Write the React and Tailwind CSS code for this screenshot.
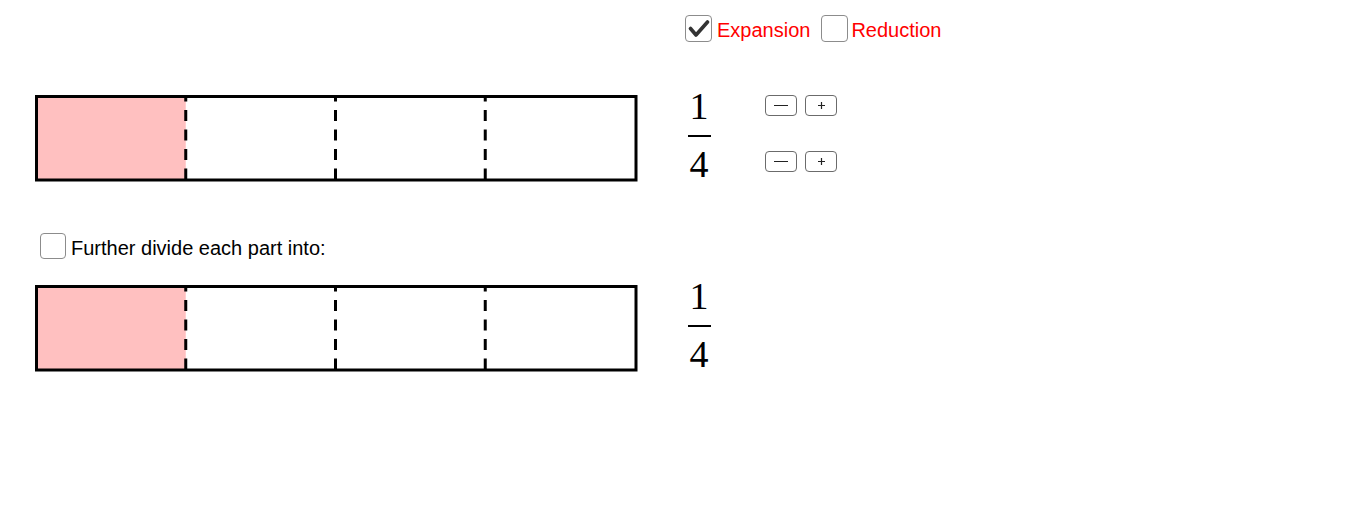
import React from "react";

function CheckBox({ checked = false, size = 27 }) {
  return (
    <div
      className="shrink-0 rounded-[4px] border-[1.5px] border-[#8c8c8c] bg-white flex items-center justify-center"
      style={{ width: size, height: size }}
    >
      {checked && (
        <svg width="22" height="20" viewBox="0 0 22 20">
          <path
            d="M2.5 9.5 L8 16 L19.5 3"
            fill="none"
            stroke="#333"
            strokeWidth="3.6"
            strokeLinecap="round"
            strokeLinejoin="round"
          />
        </svg>
      )}
    </div>
  );
}

function StepButton({ kind }) {
  return (
    <button className="w-[32px] h-[21px] rounded-[4px] border border-[#6b6b6b] bg-white flex items-center justify-center">
      {kind === "minus" ? (
        <div className="w-[14px] h-[1.5px] bg-[#222]" />
      ) : (
        <svg width="9" height="9" viewBox="0 0 9 9">
          <path d="M4.5 1 V8 M1 4.5 H8" stroke="#222" strokeWidth="1.2" />
        </svg>
      )}
    </button>
  );
}

function FractionBar({ parts = 4, shaded = 1 }) {
  // outer stroke edges land at x 35..637, y 95..181 on the page
  const x0 = 2.5;
  const x1 = 602;
  const y0 = 3.5;
  const y1 = 87;
  const step = 149.75;
  const dividers = [];
  for (let i = 1; i < parts; i++) dividers.push(x0 + step * i - 0.5);
  return (
    <svg width="604" height="90" viewBox="0 0 604 90" className="block">
      <rect x={x0} y={y0} width={dividers[shaded - 1] - x0} height={y1 - y0} fill="#ffc0c0" />
      {dividers.map((x) => (
        <line
          key={x}
          x1={x}
          y1={2}
          x2={x}
          y2={88}
          stroke="#000"
          strokeWidth="3"
          strokeDasharray="11 8.5"
          strokeDashoffset="4.5"
        />
      ))}
      <rect x={x0} y={y0} width={x1 - x0} height={y1 - y0} fill="none" stroke="#000" strokeWidth="3" />
    </svg>
  );
}

function Fraction({ num, den }) {
  return (
    <div className="w-[24px] flex flex-col items-center font-['Liberation_Serif','Times_New_Roman',serif] text-[38px] leading-[38px] text-black">
      <div className="h-[38px]">{num}</div>
      <div className="mt-[10px] w-[23px] h-[1.5px] bg-black" />
      <div className="mt-[8.5px] h-[38px]">{den}</div>
    </div>
  );
}

export default function App() {
  return (
    <div className="w-[1366px] h-[530px] bg-white overflow-hidden font-['Liberation_Sans',Arial,sans-serif]">
      {/* Mode toggles */}
      <div className="flex items-start pt-[15px] pl-[685px] h-[42px]">
        <CheckBox checked />
        <span className="ml-[5px] mt-[2px] text-[20px] leading-[27px] text-[#ff0000]">Expansion</span>
        <div className="ml-[11px]">
          <CheckBox />
        </div>
        <span className="ml-[3px] mt-[2px] text-[20px] leading-[27px] text-[#ff0000]">Reduction</span>
      </div>

      {/* Original fraction */}
      <div className="flex items-start mt-[45px] h-[96px]">
        <div className="ml-[34px] mt-[6px]">
          <FractionBar parts={4} shaded={1} />
        </div>
        <div className="ml-[49px]">
          <Fraction num="1" den="4" />
        </div>
        <div className="ml-[54px] mt-[8px] flex flex-col gap-[35px]">
          <div className="flex gap-[8px]">
            <StepButton kind="minus" />
            <StepButton kind="plus" />
          </div>
          <div className="flex gap-[8px]">
            <StepButton kind="minus" />
            <StepButton kind="plus" />
          </div>
        </div>
      </div>

      {/* Further divide option */}
      <div className="flex items-start pl-[40px] mt-[50px] h-[26px]">
        <CheckBox size={26} />
        <span className="ml-[5px] mt-[2px] text-[20px] leading-[26px] text-black">Further divide each part into:</span>
      </div>

      {/* Resulting fraction */}
      <div className="flex items-start mt-[18px] h-[96px]">
        <div className="ml-[34px] mt-[6px]">
          <FractionBar parts={4} shaded={1} />
        </div>
        <div className="ml-[49px]">
          <Fraction num="1" den="4" />
        </div>
      </div>
    </div>
  );
}
